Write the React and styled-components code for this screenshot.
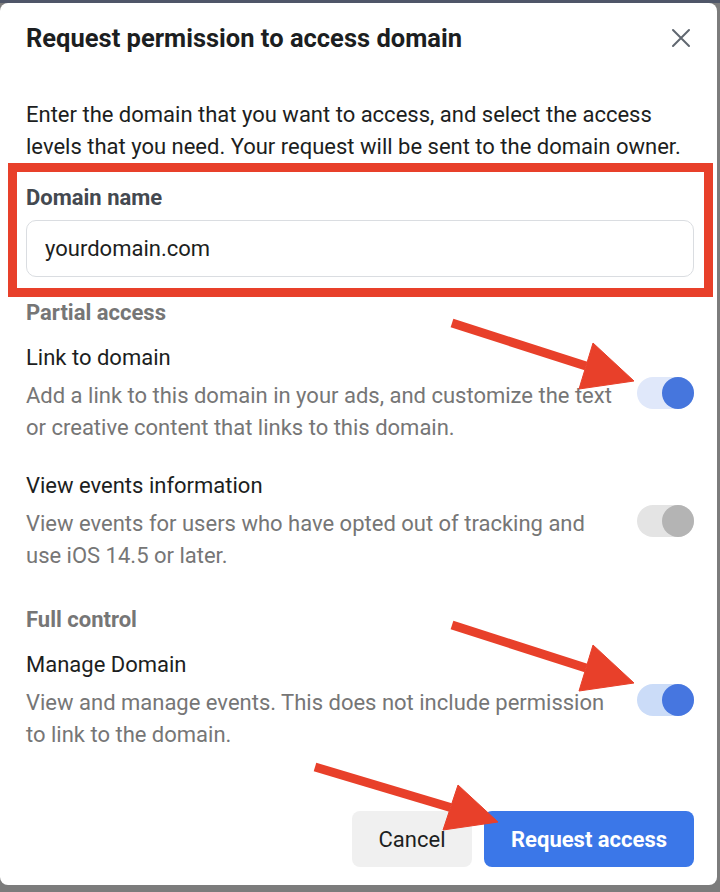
import React from 'react'
import styled, { createGlobalStyle } from 'styled-components'

const GlobalStyle = createGlobalStyle`
  html, body {
    margin: 0;
    padding: 0;
  }
  body {
    background: linear-gradient(#4f5668 0, #4f5668 3px, #7c7c7c 3px);
    font-family: Roboto, 'Liberation Sans', Arial, sans-serif;
    -webkit-font-smoothing: antialiased;
  }
  * {
    box-sizing: border-box;
  }
`

const Page = styled.div`
  position: relative;
  width: 720px;
  height: 892px;
  padding: 3px 3px 0 0;
  overflow: hidden;
`

const Dialog = styled.div`
  background: #fff;
  border-radius: 8px;
  padding: 21px 23px 18px 26px;
`

const Header = styled.div`
  display: flex;
  align-items: center;
  justify-content: space-between;
  height: 28px;
`

const Title = styled.h1`
  margin: 0;
  font-size: 25.5px;
  line-height: 28px;
  font-weight: 700;
  color: #1c1e21;
`

const CloseButton = styled.button`
  display: flex;
  align-items: center;
  justify-content: center;
  width: 20px;
  height: 20px;
  margin-right: 3px;
  padding: 0;
  border: 0;
  background: none;
  color: #606770;
  cursor: pointer;
`

const Intro = styled.p`
  margin: 47px 0 0;
  font-size: 22px;
  line-height: 32px;
  color: #1c1e21;
`

const Highlight = styled.div`
  margin: 0 -19px 0 -18px;
  border: 9px solid #e8402a;
  padding: 14px 10px 11px 9px;
`

const FieldLabel = styled.label`
  display: block;
  font-size: 22px;
  line-height: 24px;
  font-weight: 700;
  color: #444950;
`

const TextInput = styled.input`
  display: block;
  width: 100%;
  height: 57px;
  margin-top: 10px;
  padding: 0 18px;
  border: 1px solid #dadde1;
  border-radius: 10px;
  font-family: inherit;
  font-size: 22px;
  color: #1c1e21;
  outline: none;
`

const SectionTitle = styled.h2`
  margin: ${p => p.$top}px 0 17px;
  font-size: 22px;
  line-height: 24px;
  font-weight: 700;
  color: #767676;
`

const OptionRow = styled.div`
  display: flex;
  align-items: center;
  gap: 14px;
  margin-bottom: ${p => p.$bottom || 0}px;
`

const OptionText = styled.div`
  flex: 1;
`

const OptionName = styled.div`
  font-size: 22px;
  line-height: 32px;
  color: #1c1e21;
  margin-bottom: 6px;
`

const OptionHint = styled.div`
  font-size: 22px;
  line-height: 32px;
  color: #767676;
`

const switchTones = {
  on: { track: '#e0e8fa', thumb: '#4676dd' },
  onStrong: { track: '#cbdcf8', thumb: '#4676e0' },
  off: { track: '#e4e4e4', thumb: '#b4b4b4' }
}

const Switch = styled.span`
  position: relative;
  flex: none;
  width: 57px;
  height: 32px;
  border-radius: 16px;
  background: ${p => switchTones[p.$tone].track};

  &::after {
    content: '';
    position: absolute;
    top: 0;
    right: 0;
    width: 32px;
    height: 32px;
    border-radius: 50%;
    background: ${p => switchTones[p.$tone].thumb};
  }
`

const Footer = styled.div`
  display: flex;
  justify-content: flex-end;
  gap: 12px;
  margin-top: 60px;
`

const Button = styled.button`
  height: 56px;
  padding: 0;
  width: ${p => p.$width}px;
  border: 0;
  border-radius: 8px;
  font-family: inherit;
  font-size: 22px;
  font-weight: ${p => (p.$primary ? 700 : 400)};
  color: ${p => (p.$primary ? '#fff' : '#1c1e21')};
  background: ${p => (p.$primary ? '#3b77e8' : '#f0f0f0')};
  cursor: pointer;
`

const Annotations = styled.svg`
  position: absolute;
  top: 0;
  left: 0;
  pointer-events: none;
`

const CloseIcon = () => (
  <svg width='20' height='20' viewBox='0 0 20 20'>
    <path d='M2 2 L18 18 M18 2 L2 18' stroke='currentColor' strokeWidth='2' strokeLinecap='round' />
  </svg>
)

const arrows = [
  { from: [452, 323], head: [[593, 343], [634, 381], [579, 389]] },
  { from: [452, 625], head: [[593, 645], [634, 683], [579, 691]] },
  { from: [315, 767], head: [[458, 785], [498, 822], [443, 830]] }
]

const Arrow = ({ from, head }) => {
  const base = [(head[0][0] + head[2][0]) / 2, (head[0][1] + head[2][1]) / 2]
  return (
    <g fill='#e8402a' stroke='#e8402a'>
      <line x1={from[0]} y1={from[1]} x2={base[0]} y2={base[1]} strokeWidth='9' />
      <polygon points={head.map(pt => pt.join(',')).join(' ')} strokeWidth='1' strokeLinejoin='round' />
    </g>
  )
}

const options = [
  {
    section: 'Partial access',
    top: 4,
    items: [
      {
        name: 'Link to domain',
        hint: 'Add a link to this domain in your ads, and customize the text or creative content that links to this domain.',
        tone: 'on'
      },
      {
        name: 'View events information',
        hint: 'View events for users who have opted out of tracking and use iOS 14.5 or later.',
        tone: 'off'
      }
    ]
  },
  {
    section: 'Full control',
    top: 36,
    items: [
      {
        name: 'Manage Domain',
        hint: 'View and manage events. This does not include permission to link to the domain.',
        tone: 'onStrong'
      }
    ]
  }
]

export default function App () {
  return (
    <>
      <GlobalStyle />
      <Page>
        <Dialog>
          <Header>
            <Title>Request permission to access domain</Title>
            <CloseButton aria-label='Close'>
              <CloseIcon />
            </CloseButton>
          </Header>
          <Intro>
            Enter the domain that you want to access, and select the access levels that you need. Your request will be sent to the domain owner.
          </Intro>
          <Highlight>
            <FieldLabel>Domain name</FieldLabel>
            <TextInput defaultValue='yourdomain.com' />
          </Highlight>
          {options.map(group => (
            <div key={group.section}>
              <SectionTitle $top={group.top}>{group.section}</SectionTitle>
              {group.items.map((item, i) => (
                <OptionRow key={item.name} $bottom={i < group.items.length - 1 ? 26 : 0}>
                  <OptionText>
                    <OptionName>{item.name}</OptionName>
                    <OptionHint>{item.hint}</OptionHint>
                  </OptionText>
                  <Switch $tone={item.tone} />
                </OptionRow>
              ))}
            </div>
          ))}
          <Footer>
            <Button $width={120}>Cancel</Button>
            <Button $primary $width={210}>Request access</Button>
          </Footer>
        </Dialog>
        <Annotations width='720' height='892' viewBox='0 0 720 892'>
          {arrows.map((a, i) => <Arrow key={i} {...a} />)}
        </Annotations>
      </Page>
    </>
  )
}
